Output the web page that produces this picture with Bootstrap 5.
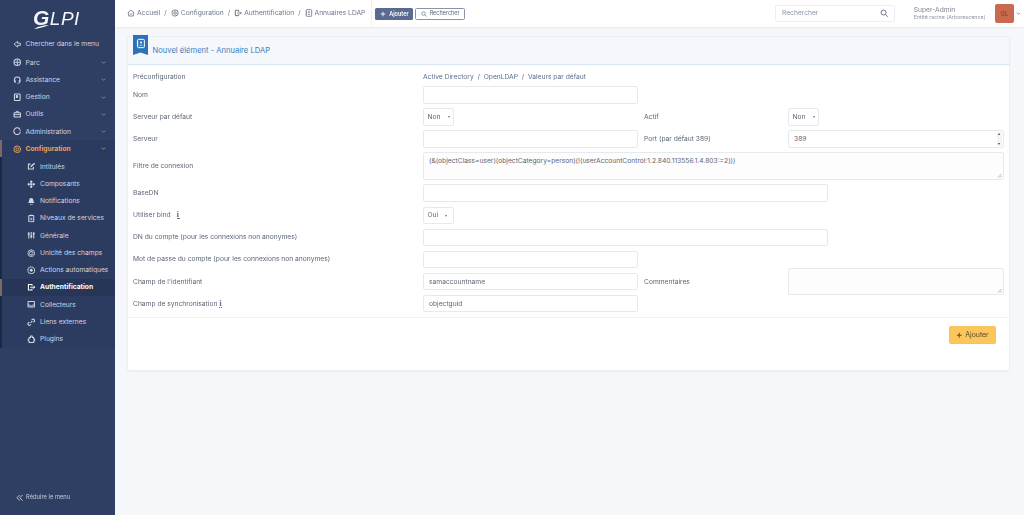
<!DOCTYPE html>
<html lang="fr">
<head>
<meta charset="utf-8">
<title>Annuaires LDAP - GLPI</title>
<link rel="stylesheet" href="https://cdn.jsdelivr.net/npm/bootstrap@5.3.0/dist/css/bootstrap.min.css">
<style>
html,body{height:100%;}
body{font-family:Inter,"Liberation Sans",sans-serif;font-size:6.7px;background:#f5f7fb;color:#5b6577;overflow:hidden;}
.shell{height:515px;opacity:.999;}
.side{width:115px;flex:none;background:#2f3f64;color:#d5dae6;}
.logo{height:35.500px;padding-left:33px;padding-top:7px;position:relative;}
.logo-text{font-family:"Liberation Sans",sans-serif;font-style:italic;font-size:19px;line-height:22px;color:#f4f6fa;letter-spacing:.5px;}
.logo-g{font-weight:700;font-size:21px;}
.logo-tail{position:absolute;left:34px;top:25px;width:15px;height:4px;color:#f4f6fa;}
.side-item{height:17.25px;padding-left:12.5px;padding-right:9px;color:#d0d6e3;gap:4.5px;text-decoration:none;white-space:nowrap;}
.side-search{margin-bottom:1.2px;}
.side-item svg.ic{width:8.5px;height:8.5px;flex:none;}
.side-item svg.chev{width:5px;height:5px;margin-left:auto;flex:none;color:#8f9ab3;}
.side-open{background:#2b3a5f;border-left:2px solid #7d6a62;padding-left:10.5px;color:#e9a25a;font-weight:700;}
.side-open svg.chev{color:#b9a08c;}
.sub-box{background:#2c3b60;border-left:2px solid #1c2743;padding-top:.5px;}
.sub-box .side-item{padding-left:25px;gap:4.5px;}
.sub-box .side-cur{background:#273557;color:#fff;font-weight:700;border-left:2px solid #7d6a62;margin-left:-2px;}
.side-foot{margin-top:auto;padding:0 0 13px 16px;color:#c5cbdb;gap:2.5px;font-size:5.8px;}
.side-foot svg{width:7.5px;height:7.5px;}
.top{height:27px;background:#fff;box-shadow:0 1px 2px rgba(30,40,70,.06);padding-left:12px;color:#6b7485;flex:none;}
.crumb{gap:2px;color:#6b7485;}
.crumb svg{width:8px;height:8px;color:#6b7485;}
.crumb-sep{margin:0 2px;}
.top-sep{width:1px;height:27px;background:#eef0f4;margin:0 3.5px 0 5.5px;}
.btn-add{background:#5a6b92;color:#fff;font-size:5.5px;font-weight:600;padding:0 4px;height:12px;width:38px;line-height:12px;border:0;border-radius:1.5px;display:flex;align-items:center;gap:3px;justify-content:center;}
.btn-find{background:#fff;color:#5f6a7c;font-size:5.5px;width:50px;padding:0 4px;height:12px;border:1px solid #8b95a8;border-radius:1.5px;margin-left:2px;display:flex;align-items:center;gap:2.5px;justify-content:center;}
.btn-add svg,.btn-find svg{width:6px;height:6px;}
.top-search{width:120px;height:17px;margin-left:auto;border:1px solid #eceef2;border-radius:2px;padding:0 6px;color:#8a93a3;}
.top-search svg{width:8.5px;height:8.500px;color:#626c7e;margin-left:auto;}
.user-box{margin-left:18.7px;line-height:1.2;width:81.3px;}
.user-name{font-size:6.7px;color:#7c8595;}
.user-ent{font-size:5.3px;color:#8b93a2;white-space:nowrap;}
.avatar{width:19px;height:19px;background:#c96a50;color:#6e3a2c;border-radius:2px;font-size:6px;}
.user-chev{width:5px;height:5px;margin:0 3px 0 2px;color:#7c8595;flex:none;}
.page-card{margin:9px 14px 0 12px;height:334.5px;background:#fff;border:1px solid #eceff4;border-radius:2px;box-shadow:0 1px 2px rgba(30,40,70,.05);}
.card-top{height:28px;background:#f4f8fc;border-bottom:1px solid #d6e6f5;padding-left:5px;position:relative;}
.ribbon{width:15px;height:20px;background:#2c72b8;position:absolute;left:5px;top:-2px;clip-path:polygon(0 0,100% 0,100% 100%,50% 87%,0 100%);display:flex;justify-content:center;padding-top:3px;}
.ribbon svg{width:10px;height:11px;color:#fff;}
.card-title{margin-left:19.500px;padding-top:8px;color:#3f7db5;font-size:7.6px;}
.form-area{display:grid;grid-template-columns:290px 221px 144px 216px;grid-template-rows:9.5px 17.5px 17.5px 17.5px 27.5px 17.5px 17.5px 17.5px 17.5px 17.5px 17.5px;row-gap:4.6px;padding:7px 5px 0 5px;align-items:center;}
.form-area a{color:#5a6f8c;text-decoration:none;}
.fld{height:17.5px;background:#fff;border:1px solid #e6e9ee;border-radius:2px;padding:0 5px;display:flex;align-items:center;color:#5b6577;width:215px;}
.fld-wide{width:404.5px;}
.fld-half{width:216px;}
.pick{height:17.5px;width:31px;background:#fff;border:1px solid #e6e9ee;border-radius:2px;padding:0 0 0 3.5px;display:flex;align-items:center;gap:7px;}
.pick-arrow{width:0;height:0;border:1.5px solid transparent;border-top:2px solid #6b7485;margin-top:2px;}
.area{background:#fdfdfd;border:1px solid #e6e9ee;border-radius:2px;height:27.5px;position:relative;padding:3px 5px;grid-column:2/span 3;width:581px;line-height:10px;white-space:nowrap;}
.area-side{width:216px;grid-column:4;margin:-5px 0;height:27.5px;padding:0;}
.grip{position:absolute;right:1px;bottom:1px;width:5px;height:5px;}
.spin{position:absolute;right:1px;top:1px;bottom:1px;width:5px;background:#f4f4f4;}
.spin::before,.spin::after{content:"";position:absolute;left:.7px;border:1.7px solid transparent;}
.spin::before{top:1px;border-bottom:2.4px solid #444;border-top:0;}
.spin::after{bottom:1px;border-top:2.4px solid #444;border-bottom:0;}
.info-i{font-family:"Liberation Serif",serif;font-weight:700;color:#6a7385;font-size:9px;margin-left:4px;border-bottom:1px dotted #6a7385;line-height:8px;display:inline-block;}
.foot-row{border-top:1px solid #eef0f3;margin-top:5px;height:52px;padding:8px 13px 0 0;}
.btn-save{background:#fdc65b;border:1px solid #f4c25f;color:#50463a;height:17.5px;width:47px;padding:0;justify-content:center;font-size:6.9px;border-radius:2px;display:flex;align-items:center;gap:2.5px;}
.btn-save svg{width:6.5px;height:6.5px;}
</style>
</head>
<body>
<svg width="0" height="0" class="d-none">
<symbol id="i-search-arrow" viewBox="0 0 24 24"><path d="M3 9h8V4l10 8-10 8v-5H3z" transform="matrix(-1 0 0 1 24 0)" fill="none" stroke="currentColor" stroke-width="2.5"/></symbol>
<symbol id="i-box" viewBox="0 0 24 24"><circle cx="12" cy="12" r="9" fill="none" stroke="currentColor" stroke-width="3"/><path d="M12 4v16M4 12h16" stroke="currentColor" stroke-width="2.5"/></symbol>
<symbol id="i-head" viewBox="0 0 24 24"><path d="M4 14V11a8 8 0 0 1 16 0v3" fill="none" stroke="currentColor" stroke-width="3"/><rect x="3" y="12" width="5" height="7" rx="2" fill="currentColor"/><rect x="16" y="12" width="5" height="7" rx="2" fill="currentColor"/><path d="M18 19c0 2-3 3-6 3" fill="none" stroke="currentColor" stroke-width="2"/></symbol>
<symbol id="i-wallet" viewBox="0 0 24 24"><rect x="4" y="3" width="16" height="18" rx="2" fill="none" stroke="currentColor" stroke-width="3"/><rect x="8" y="6" width="6" height="8" fill="currentColor"/></symbol>
<symbol id="i-case" viewBox="0 0 24 24"><rect x="3" y="8" width="18" height="12" rx="2" fill="none" stroke="currentColor" stroke-width="3"/><path d="M9 8V4h6v4M3 13h18" fill="none" stroke="currentColor" stroke-width="2.5"/></symbol>
<symbol id="i-shield" viewBox="0 0 24 24"><path d="M20 7a9.5 9.5 0 1 0 1 7" fill="none" stroke="currentColor" stroke-width="3"/><circle cx="20" cy="10" r="1.8" fill="currentColor"/></symbol>
<symbol id="i-cog" viewBox="0 0 24 24"><circle cx="12" cy="12" r="9" fill="none" stroke="currentColor" stroke-width="3.4" stroke-dasharray="3 .8"/><circle cx="12" cy="12" r="3.8" fill="none" stroke="currentColor" stroke-width="2.5"/></symbol>
<symbol id="i-edit" viewBox="0 0 24 24"><path d="M10 6H4v14h14v-6" fill="none" stroke="currentColor" stroke-width="3"/><path d="M9 15l1-4L20 2l3 3-10 9z" fill="currentColor"/></symbol>
<symbol id="i-comp" viewBox="0 0 24 24"><g fill="currentColor"><rect x="9" y="2" width="6" height="6" rx="1" transform="rotate(45 12 5)"/><rect x="9" y="16" width="6" height="6" rx="1" transform="rotate(45 12 19)"/><rect x="2" y="9" width="6" height="6" rx="1" transform="rotate(45 5 12)"/><rect x="16" y="9" width="6" height="6" rx="1" transform="rotate(45 19 12)"/><rect x="9" y="9" width="6" height="6"/></g></symbol>
<symbol id="i-bell" viewBox="0 0 24 24"><path d="M12 3a6 6 0 0 0-6 6c0 5-2 6-3 8h18c-1-2-3-3-3-8a6 6 0 0 0-6-6z" fill="currentColor"/><path d="M9 20a3 3 0 0 0 6 0" fill="none" stroke="currentColor" stroke-width="2.5"/></symbol>
<symbol id="i-clip" viewBox="0 0 24 24"><rect x="5" y="4" width="14" height="18" rx="2" fill="none" stroke="currentColor" stroke-width="3"/><rect x="9" y="2" width="6" height="4" fill="currentColor"/><path d="M9 12h6M9 16h6" stroke="currentColor" stroke-width="2.4"/></symbol>
<symbol id="i-sliders" viewBox="0 0 24 24"><path d="M5 3v18M12 3v18M19 3v18" stroke="currentColor" stroke-width="3"/><path d="M2 9h6M9 15h6M16 8h6" stroke="currentColor" stroke-width="3.5"/></symbol>
<symbol id="i-fp" viewBox="0 0 24 24"><circle cx="12" cy="12" r="9.5" fill="none" stroke="currentColor" stroke-width="2.4"/><circle cx="12" cy="12" r="5.2" fill="none" stroke="currentColor" stroke-width="2.4"/><path d="M12 2v20" stroke="currentColor" stroke-width="2" stroke-dasharray="2 2"/></symbol>
<symbol id="i-auto" viewBox="0 0 24 24"><circle cx="12" cy="12" r="9.5" fill="none" stroke="currentColor" stroke-width="3" stroke-dasharray="4 1"/><circle cx="12" cy="12" r="4" fill="currentColor"/></symbol>
<symbol id="i-signin" viewBox="0 0 24 24"><path d="M14 8V4H4v16h10v-4" fill="none" stroke="currentColor" stroke-width="3"/><path d="M9 12h13M18 8l4 4-4 4" fill="none" stroke="currentColor" stroke-width="2.6"/></symbol>
<symbol id="i-inbox" viewBox="0 0 24 24"><rect x="3" y="4" width="18" height="16" rx="2" fill="none" stroke="currentColor" stroke-width="3"/><path d="M3 14h5l2 3h4l2-3h5" fill="none" stroke="currentColor" stroke-width="2.5"/></symbol>
<symbol id="i-link" viewBox="0 0 24 24"><path d="M10 14l5-5M13 6l2-2a4 4 0 0 1 5.600 5.600l-3 3M11 18l-2 2a4 4 0 0 1-5.600-5.600l3-3" fill="none" stroke="currentColor" stroke-width="3"/></symbol>
<symbol id="i-plug" viewBox="0 0 24 24"><path d="M10 3h5v4h4v5h3v4h-3v5H6v-4a3 3 0 0 1 0-6V7h4z" fill="none" stroke="currentColor" stroke-width="3" stroke-linejoin="round"/></symbol>
<symbol id="i-chev" viewBox="0 0 24 24"><path d="M4 8l8 8 8-8" fill="none" stroke="currentColor" stroke-width="4"/></symbol>
<symbol id="i-dbl" viewBox="0 0 24 24"><path d="M12 3l-9 9 9 9M21 3l-9 9 9 9" fill="none" stroke="currentColor" stroke-width="3"/></symbol>
<symbol id="i-home" viewBox="0 0 24 24"><path d="M2 12l10-9 10 9M5 10v11h14V10" fill="none" stroke="currentColor" stroke-width="2.4"/><path d="M9 15h6" stroke="currentColor" stroke-width="2.4"/></symbol>
<symbol id="i-addr" viewBox="0 0 24 24"><rect x="4" y="2" width="16" height="20" rx="2" fill="none" stroke="currentColor" stroke-width="2.400"/><circle cx="12" cy="9.500" r="2.500" fill="currentColor"/><path d="M8 17c0-3 8-3 8 0z" fill="currentColor"/><path d="M2 7h3M2 12h3M2 17h3" stroke="currentColor" stroke-width="2"/></symbol>
<symbol id="i-plus" viewBox="0 0 24 24"><path d="M12 3v18M3 12h18" stroke="currentColor" stroke-width="3.500"/></symbol>
<symbol id="i-mag" viewBox="0 0 24 24"><circle cx="10" cy="10" r="7" fill="none" stroke="currentColor" stroke-width="2.600"/><path d="M15 15l7 7" stroke="currentColor" stroke-width="2.600"/></symbol>
<symbol id="i-grip" viewBox="0 0 10 10"><path d="M9 2L2 9M9 6L6 9" stroke="#777" stroke-width="1"/></symbol>
</svg>
<div class="shell d-flex">
  <aside class="side d-flex flex-column">
    <div class="logo"><span class="logo-text"><span class="logo-g">G</span>LPI</span><svg class="logo-tail" viewBox="0 0 15 4"><path d="M0 4C5 3.500 10 2 15 0C10 0 5 1 0 4z" fill="currentColor"/></svg></div>
    <nav class="nav flex-column flex-nowrap">
      <a class="side-item side-search d-flex align-items-center"><svg class="ic"><use href="#i-search-arrow"/></svg>Chercher dans le menu</a>
      <a class="side-item d-flex align-items-center mt-0"><svg class="ic"><use href="#i-box"/></svg>Parc<svg class="chev"><use href="#i-chev"/></svg></a>
      <a class="side-item d-flex align-items-center"><svg class="ic"><use href="#i-head"/></svg>Assistance<svg class="chev"><use href="#i-chev"/></svg></a>
      <a class="side-item d-flex align-items-center"><svg class="ic"><use href="#i-wallet"/></svg>Gestion<svg class="chev"><use href="#i-chev"/></svg></a>
      <a class="side-item d-flex align-items-center"><svg class="ic"><use href="#i-case"/></svg>Outils<svg class="chev"><use href="#i-chev"/></svg></a>
      <a class="side-item d-flex align-items-center"><svg class="ic"><use href="#i-shield"/></svg>Administration<svg class="chev"><use href="#i-chev"/></svg></a>
      <a class="side-item side-open d-flex align-items-center"><svg class="ic"><use href="#i-cog"/></svg>Configuration<svg class="chev"><use href="#i-chev"/></svg></a>
      <div class="sub-box">
        <a class="side-item d-flex align-items-center"><svg class="ic"><use href="#i-edit"/></svg>Intitulés</a>
        <a class="side-item d-flex align-items-center"><svg class="ic"><use href="#i-comp"/></svg>Composants</a>
        <a class="side-item d-flex align-items-center"><svg class="ic"><use href="#i-bell"/></svg>Notifications</a>
        <a class="side-item d-flex align-items-center"><svg class="ic"><use href="#i-clip"/></svg>Niveaux de services</a>
        <a class="side-item d-flex align-items-center"><svg class="ic"><use href="#i-sliders"/></svg>Générale</a>
        <a class="side-item d-flex align-items-center"><svg class="ic"><use href="#i-fp"/></svg>Unicité des champs</a>
        <a class="side-item d-flex align-items-center"><svg class="ic"><use href="#i-auto"/></svg>Actions automatiques</a>
        <a class="side-item side-cur d-flex align-items-center"><svg class="ic"><use href="#i-signin"/></svg>Authentification</a>
        <a class="side-item d-flex align-items-center"><svg class="ic"><use href="#i-inbox"/></svg>Collecteurs</a>
        <a class="side-item d-flex align-items-center"><svg class="ic"><use href="#i-link"/></svg>Liens externes</a>
        <a class="side-item d-flex align-items-center"><svg class="ic"><use href="#i-plug"/></svg>Plugins</a>
      </div>
    </nav>
    <div class="side-foot d-flex align-items-center"><svg><use href="#i-dbl"/></svg>Réduire le menu</div>
  </aside>
  <main class="flex-grow-1 d-flex flex-column">
    <header class="top d-flex align-items-center">
      <div class="crumb d-flex align-items-center"><svg><use href="#i-home"/></svg>Accueil<span class="crumb-sep">/</span><svg><use href="#i-cog"/></svg>Configuration<span class="crumb-sep">/</span><svg><use href="#i-signin"/></svg>Authentification<span class="crumb-sep">/</span><svg><use href="#i-addr"/></svg>Annuaires LDAP</div>
      <div class="top-sep"></div>
      <button type="button" class="btn-add"><svg><use href="#i-plus"/></svg>Ajouter</button>
      <button type="button" class="btn-find"><svg><use href="#i-mag"/></svg>Rechercher</button>
      <div class="top-search d-flex align-items-center">Rechercher<svg><use href="#i-mag"/></svg></div>
      <div class="user-box"><div class="user-name">Super-Admin</div><div class="user-ent">Entité racine (Arborescence)</div></div>
      <div class="avatar d-flex align-items-center justify-content-center">GL</div>
      <svg class="user-chev"><use href="#i-chev"/></svg>
    </header>
    <section class="page-card">
      <div class="card-top">
        <div class="ribbon"><svg><use href="#i-addr"/></svg></div>
        <div class="card-title">Nouvel élément - Annuaire LDAP</div>
      </div>
      <div class="form-area">
        <div>Préconfiguration</div><div class="text-nowrap" style="grid-column:2/span 3"><a href="#">Active Directory</a>&nbsp; / &nbsp;<a href="#">OpenLDAP</a>&nbsp; / &nbsp;<a href="#">Valeurs par défaut</a></div>
        <div>Nom</div><div class="fld" style="grid-column:2"></div>
        <div style="grid-column:1">Serveur par défaut</div><div class="pick">Non<span class="pick-arrow"></span></div><div>Actif</div><div class="pick">Non<span class="pick-arrow"></span></div>
        <div style="grid-column:1">Serveur</div><div class="fld"></div><div>Port (par défaut 389)</div><div class="fld fld-half position-relative">389<span class="spin"></span></div>
        <div style="grid-column:1">Filtre de connexion</div><div class="area">(&amp;(objectClass=user)(objectCategory=person)(!(userAccountControl:1.2.840.113556.1.4.803:=2)))<svg class="grip"><use href="#i-grip"/></svg></div>
        <div style="grid-column:1">BaseDN</div><div class="fld fld-wide" style="grid-column:2/span 3"></div>
        <div style="grid-column:1">Utiliser bind <span class="info-i">i</span></div><div class="pick">Oui<span class="pick-arrow"></span></div>
        <div style="grid-column:1">DN du compte (pour les connexions non anonymes)</div><div class="fld fld-wide" style="grid-column:2/span 3"></div>
        <div style="grid-column:1">Mot de passe du compte (pour les connexions non anonymes)</div><div class="fld" style="grid-column:2"></div>
        <div style="grid-column:1">Champ de l'identifiant</div><div class="fld">samaccountname</div><div>Commentaires</div><div class="area area-side"><svg class="grip"><use href="#i-grip"/></svg></div>
        <div style="grid-column:1">Champ de synchronisation <span class="info-i ms-0">i</span></div><div class="fld">objectguid</div>
      </div>
      <div class="foot-row d-flex justify-content-end align-items-start">
        <button type="button" class="btn-save"><svg><use href="#i-plus"/></svg>Ajouter</button>
      </div>
    </section>
  </main>
</div>
<script src="https://cdn.jsdelivr.net/npm/bootstrap@5.3.0/dist/js/bootstrap.bundle.min.js"></script>
</body>
</html>
